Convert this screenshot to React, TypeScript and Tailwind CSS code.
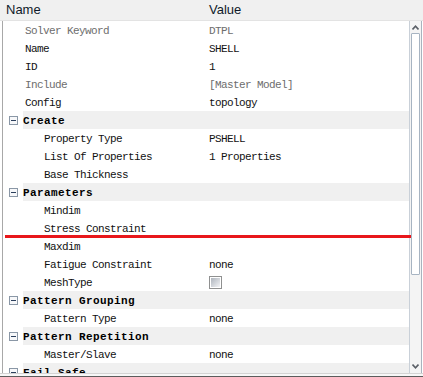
import React from "react";

type Row =
  | { kind: "prop"; name: string; value?: string; gray?: boolean; child?: boolean; check?: boolean }
  | { kind: "group"; name: string };

const rows: Row[] = [
  { kind: "prop", name: "Solver Keyword", value: "DTPL", gray: true },
  { kind: "prop", name: "Name", value: "SHELL" },
  { kind: "prop", name: "ID", value: "1" },
  { kind: "prop", name: "Include", value: "[Master Model]", gray: true },
  { kind: "prop", name: "Config", value: "topology" },
  { kind: "group", name: "Create" },
  { kind: "prop", name: "Property Type", value: "PSHELL", child: true },
  { kind: "prop", name: "List Of Properties", value: "1 Properties", child: true },
  { kind: "prop", name: "Base Thickness", child: true },
  { kind: "group", name: "Parameters" },
  { kind: "prop", name: "Mindim", child: true },
  { kind: "prop", name: "Stress Constraint", child: true },
  { kind: "prop", name: "Maxdim", child: true },
  { kind: "prop", name: "Fatigue Constraint", value: "none", child: true },
  { kind: "prop", name: "MeshType", child: true, check: true },
  { kind: "group", name: "Pattern Grouping" },
  { kind: "prop", name: "Pattern Type", value: "none", child: true },
  { kind: "group", name: "Pattern Repetition" },
  { kind: "prop", name: "Master/Slave", value: "none", child: true },
  { kind: "group", name: "Fail Safe" },
];

function MinusBox() {
  return (
    <div className="flex size-[9px] items-center justify-center border border-[#8a97a6] bg-[#f7f8fa]">
      <div className="h-[1px] w-[5px] bg-[#2b3f5c]" />
    </div>
  );
}

function Checkbox() {
  return (
    <div className="size-[13px] border border-[#8f9090] bg-white p-[1px]">
      <div className="size-full bg-gradient-to-br from-[#aeb4bd] to-[#f3f4f6]" />
    </div>
  );
}

function PropRow({ row }: { row: Row }) {
  if (row.kind === "group") {
    return (
      <div className="flex h-[18px] items-center">
        <div className="flex w-[20px] shrink-0 justify-center pl-[1px]">
          <MinusBox />
        </div>
        <div className="flex h-full flex-1 items-center bg-[#f0f0f0] pt-[2px] font-bold tracking-[0.4px] text-black">
          {row.name}
        </div>
      </div>
    );
  }
  const color = row.gray ? "text-[#6d6d6d]" : "text-[#111]";
  return (
    <div className={`flex h-[18px] items-center ${color}`}>
      <div className="w-[20px] shrink-0" />
      <div className={`w-[186px] shrink-0 whitespace-nowrap pt-[2px] ${row.child ? "pl-[21px]" : "pl-[2px]"}`}>
        {row.name}
      </div>
      <div className={`flex-1 whitespace-nowrap ${row.check ? "" : "pt-[2px]"}`}>
        {row.check ? <Checkbox /> : row.value}
      </div>
    </div>
  );
}

export default function App() {
  return (
    <div className="relative flex h-[377px] w-[423px] flex-col overflow-hidden bg-white">
      <div className="flex h-[21px] shrink-0 items-center border-b border-[#e3e3e3] bg-[#f0f0f0] font-['Liberation_Sans',sans-serif] text-[13px] text-[#0f1a2a]">
        <div className="w-[206px] pl-[6px]">Name</div>
        <div className="pl-[3px]">Value</div>
      </div>

      <div className="flex min-h-0 flex-1">
        <div className="w-[3px] shrink-0 border-r border-[#a8a8a8]" />
        <div className="min-w-0 flex-1 overflow-hidden font-['Liberation_Mono',monospace] text-[11px] tracking-[-0.6px]">
          {rows.map((row, i) => (
            <PropRow key={i} row={row} />
          ))}
        </div>

        {/* scrollbar */}
        <div className="flex w-[13px] shrink-0 flex-col border-l border-r border-l-[#c9d0d8] border-r-[#a9b3be] bg-[#f4f4f4]">
          <div className="flex h-[12px] shrink-0 items-center justify-center pt-[1px]">
            <svg width="7" height="5" viewBox="0 0 7 5">
              <path d="M0.5 4.5 L3.5 1.2 L6.5 4.5" fill="none" stroke="#5a5f66" strokeWidth="1.6" />
            </svg>
          </div>
          <div className="mx-[1px] h-[242px] shrink-0 rounded-[1px] border border-[#a7b4c2] bg-white" />
          <div className="flex-1" />
          <div className="flex h-[12px] shrink-0 items-center justify-center pb-[1px]">
            <svg width="7" height="5" viewBox="0 0 7 5">
              <path d="M0.5 0.5 L3.5 3.8 L6.5 0.5" fill="none" stroke="#5a5f66" strokeWidth="1.6" />
            </svg>
          </div>
        </div>
        <div className="w-[1px] shrink-0" />
      </div>

      <div className="h-[4px] shrink-0 border-t border-b border-t-[#d4d4d4] border-b-[#5c5c5c] bg-[#f7f7f7]" />

      {/* red annotation line */}
      <div className="absolute left-[5px] top-[235px] h-[3px] w-[406px] bg-[#e8171b]" />
    </div>
  );
}
